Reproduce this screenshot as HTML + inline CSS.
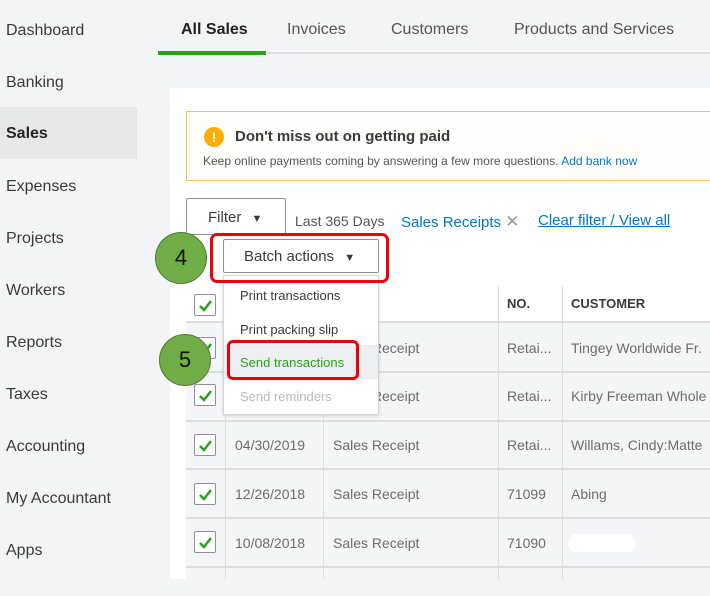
<!DOCTYPE html>
<html><head><style>
*{margin:0;padding:0;box-sizing:border-box}
body{width:710px;height:596px;overflow:hidden;background:#f3f4f8;font-family:"Liberation Sans",sans-serif;position:relative;color:#393a3d}
.a{position:absolute;white-space:nowrap}
.nav{left:6px;font-size:16px;color:#393a3d}
.cb{position:absolute;left:194px;width:22px;height:22px;border:1px solid #8d9096;background:#fff;border-radius:2px}
.cb svg{position:absolute;left:3px;top:3px}
.cell{font-size:14px;color:#6b6c72}
.vl{position:absolute;width:1px;background:#dcdde0}
.hl{position:absolute;left:186px;right:0;height:2px;background:#dcdde0}
.circ{position:absolute;width:52px;height:52px;border-radius:50%;background:#70ad47;border:1.5px solid #4e7b32;font-size:22px;color:#111;text-align:center;line-height:49px}
</style></head><body>
<div class="a" style="left:0;top:107px;width:137px;height:52px;background:#e6e7eb"></div>
<div class="a nav" style="top:22px">Dashboard</div>
<div class="a nav" style="top:74px">Banking</div>
<div class="a nav" style="top:125px;font-weight:bold;color:#222">Sales</div>
<div class="a nav" style="top:178px">Expenses</div>
<div class="a nav" style="top:230px">Projects</div>
<div class="a nav" style="top:282px">Workers</div>
<div class="a nav" style="top:334px">Reports</div>
<div class="a nav" style="top:386px">Taxes</div>
<div class="a nav" style="top:438px">Accounting</div>
<div class="a nav" style="top:490px">My Accountant</div>
<div class="a nav" style="top:542px">Apps</div>

<div class="a" style="left:181px;top:21px;font-size:16px;font-weight:bold;color:#222">All Sales</div>
<div class="a" style="left:287px;top:21px;font-size:16px;color:#555">Invoices</div>
<div class="a" style="left:391px;top:21px;font-size:16px;color:#555">Customers</div>
<div class="a" style="left:514px;top:21px;font-size:16px;color:#555">Products and Services</div>
<div class="a" style="left:158px;top:52px;width:552px;height:2px;background:#dcdde0"></div>
<div class="a" style="left:158px;top:51px;width:108px;height:4px;background:#2ca01c"></div>

<div class="a" style="left:170px;top:88px;width:540px;height:491px;background:#fff"></div>
<div class="a" style="left:186px;top:111px;width:530px;height:70px;border:1px solid #f8c24a;background:#fffefa"></div>
<div class="a" style="left:204px;top:127px;width:20px;height:20px;border-radius:50%;background:#ffae00;color:#fff;font-size:14px;font-weight:bold;text-align:center;line-height:20px">!</div>
<div class="a" style="left:235px;top:128px;font-size:15px;color:#393a3d;font-weight:bold;font-weight:600">Don't miss out on getting paid</div>
<div class="a" style="left:203px;top:154px;font-size:12px;color:#555">Keep online payments coming by answering a few more questions. <span style="color:#0077c5">Add bank now</span></div>

<div class="a" style="left:186px;top:198px;width:100px;height:37px;border:1px solid #8d9096;background:#fff;border-radius:2px;font-size:15px;color:#393a3d;padding:10px 0 0 21px">Filter <span style="font-size:11px;margin-left:6px">▼</span></div>
<div class="a" style="left:295px;top:213px;font-size:14px;color:#555">Last 365 Days</div>
<div class="a" style="left:401px;top:212px;font-size:15px;color:#0077c5">Sales Receipts <span style="color:#999;font-size:17px">✕</span></div>
<div class="a" style="left:538px;top:212px;font-size:15px;color:#0077c5;text-decoration:underline">Clear filter / View all</div>

<!-- table -->
<div class="a" style="left:186px;top:322px;width:524px;height:257px;background:#f4f5f8"></div>
<div class="hl" style="top:321px"></div>
<div class="hl" style="top:371px"></div>
<div class="hl" style="top:420px"></div>
<div class="hl" style="top:468px"></div>
<div class="hl" style="top:517px"></div>
<div class="hl" style="top:566px"></div>
<div class="vl" style="left:225px;top:322px;height:257px"></div>
<div class="vl" style="left:323px;top:322px;height:257px"></div>
<div class="vl" style="left:498px;top:286px;height:293px"></div>
<div class="vl" style="left:562px;top:286px;height:293px"></div>
<div class="a" style="left:507px;top:296px;font-size:13px;font-weight:bold;color:#393a3d">NO.</div>
<div class="a" style="left:571px;top:296px;font-size:13px;font-weight:bold;color:#393a3d">CUSTOMER</div>

<div class="cb" style="top:294px"><svg width="15" height="15"><path d="M2 8 L6 12 L13 3" stroke="#2ca01c" stroke-width="2.5" fill="none"/></svg></div>
<div class="cb" style="top:337px"><svg width="15" height="15"><path d="M2 8 L6 12 L13 3" stroke="#2ca01c" stroke-width="2.5" fill="none"/></svg></div>
<div class="cb" style="top:384px"><svg width="15" height="15"><path d="M2 8 L6 12 L13 3" stroke="#2ca01c" stroke-width="2.5" fill="none"/></svg></div>
<div class="cb" style="top:434px"><svg width="15" height="15"><path d="M2 8 L6 12 L13 3" stroke="#2ca01c" stroke-width="2.5" fill="none"/></svg></div>
<div class="cb" style="top:483px"><svg width="15" height="15"><path d="M2 8 L6 12 L13 3" stroke="#2ca01c" stroke-width="2.5" fill="none"/></svg></div>
<div class="cb" style="top:531px"><svg width="15" height="15"><path d="M2 8 L6 12 L13 3" stroke="#2ca01c" stroke-width="2.5" fill="none"/></svg></div>

<div class="a cell" style="left:333px;top:340px">Sales Receipt</div>
<div class="a cell" style="left:507px;top:340px">Retai...</div>
<div class="a cell" style="left:571px;top:340px">Tingey Worldwide Fr.</div>
<div class="a cell" style="left:333px;top:388px">Sales Receipt</div>
<div class="a cell" style="left:507px;top:388px">Retai...</div>
<div class="a cell" style="left:571px;top:388px">Kirby Freeman Whole</div>
<div class="a cell" style="left:235px;top:437px">04/30/2019</div>
<div class="a cell" style="left:333px;top:437px">Sales Receipt</div>
<div class="a cell" style="left:507px;top:437px">Retai...</div>
<div class="a cell" style="left:571px;top:437px">Willams, Cindy:Matte</div>
<div class="a cell" style="left:235px;top:486px">12/26/2018</div>
<div class="a cell" style="left:333px;top:486px">Sales Receipt</div>
<div class="a cell" style="left:507px;top:486px">71099</div>
<div class="a cell" style="left:571px;top:486px">Abing</div>
<div class="a cell" style="left:235px;top:535px">10/08/2018</div>
<div class="a cell" style="left:333px;top:535px">Sales Receipt</div>
<div class="a cell" style="left:507px;top:535px">71090</div>
<div class="a" style="left:568px;top:534px;width:68px;height:18px;border-radius:9px;background:#fff"></div>

<!-- dropdown -->
<div class="a" style="left:223px;top:275px;width:156px;height:140px;background:#fff;border:1px solid #d4d5d8;box-shadow:0 1px 3px rgba(0,0,0,.15)"></div>
<div class="a" style="left:224px;top:345px;width:154px;height:34px;background:#eceef1"></div>
<div class="a" style="left:240px;top:288px;font-size:13px;color:#393a3d">Print transactions</div>
<div class="a" style="left:240px;top:322px;font-size:13px;color:#393a3d">Print packing slip</div>
<div class="a" style="left:240px;top:355px;font-size:13px;color:#2ca01c">Send transactions</div>
<div class="a" style="left:240px;top:389px;font-size:13px;color:#b8b9bc">Send reminders</div>
<div class="a" style="left:227px;top:340px;width:132px;height:40px;border:3px solid #e8000b;border-radius:6px"></div>

<div class="a" style="left:223px;top:239px;width:156px;height:34px;border:1px solid #8d9096;background:#fff;border-radius:2px;font-size:15px;color:#393a3d;padding:8px 0 0 20px">Batch actions <span style="font-size:11px;margin-left:6px">▼</span></div>
<div class="a" style="left:210px;top:233px;width:179px;height:50px;border:3px solid #e8000b;border-radius:7px"></div>

<div class="circ" style="left:155px;top:232px">4</div>
<div class="circ" style="left:159px;top:334px">5</div>
</body></html>
